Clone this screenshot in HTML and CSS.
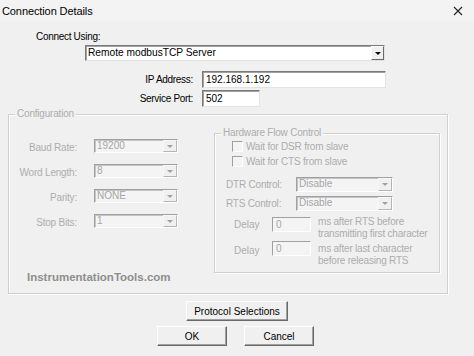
FILE: index.html
```html
<!DOCTYPE html>
<html lang="en">
<head>
    <meta charset="UTF-8">
    <title>Connection Details</title>
    <link rel="stylesheet" href="styles.css">
</head>
<body>
    <div class="dialog">
        <div class="titlebar">
            <span class="title">Connection Details</span>
            <svg class="close" width="10" height="10" viewBox="0 0 10 10">
                <path d="M1 1 L9 9 M9 1 L1 9" stroke="#222" stroke-width="1.1" fill="none"/>
            </svg>
        </div>

        <div class="connect-label">Connect Using:</div>
        <div class="combo combo-main">
            <span class="combo-text">Remote modbusTCP Server</span>
            <span class="combo-btn"><i class="arrow"></i></span>
        </div>

        <div class="field-row ip-row">
            <span class="field-label">IP Address:</span>
            <div class="textbox ip-box">192.168.1.192</div>
        </div>
        <div class="field-row port-row">
            <span class="field-label">Service Port:</span>
            <div class="textbox port-box">502</div>
        </div>

        <div class="group config">
            <span class="group-title">Configuration</span>
            <div class="config-body">
                <div class="serial">
                    <span class="serial-label">Baud Rate:</span>
                    <div class="combo combo-off"><span class="combo-text">19200</span><span class="combo-btn"><i class="arrow"></i></span></div>
                    <span class="serial-label">Word Length:</span>
                    <div class="combo combo-off"><span class="combo-text">8</span><span class="combo-btn"><i class="arrow"></i></span></div>
                    <span class="serial-label">Parity:</span>
                    <div class="combo combo-off"><span class="combo-text">NONE</span><span class="combo-btn"><i class="arrow"></i></span></div>
                    <span class="serial-label">Stop Bits:</span>
                    <div class="combo combo-off"><span class="combo-text">1</span><span class="combo-btn"><i class="arrow"></i></span></div>
                    <div class="watermark">InstrumentationTools.com</div>
                </div>

                <div class="group hw">
                    <span class="group-title">Hardware Flow Control</span>
                    <div class="check-row first"><span class="checkbox"></span>Wait for DSR from slave</div>
                    <div class="check-row"><span class="checkbox"></span>Wait for CTS from slave</div>

                    <div class="ctl-row dtr">
                        <span class="ctl-label">DTR Control:</span>
                        <div class="combo combo-off ctl-combo"><span class="combo-text">Disable</span><span class="combo-btn"><i class="arrow"></i></span></div>
                    </div>
                    <div class="ctl-row rts">
                        <span class="ctl-label">RTS Control:</span>
                        <div class="combo combo-off ctl-combo"><span class="combo-text">Disable</span><span class="combo-btn"><i class="arrow"></i></span></div>
                    </div>

                    <div class="delay-row first-delay">
                        <span class="delay-label">Delay</span>
                        <div class="textbox delay-box">0</div>
                        <span class="delay-note">ms after RTS before<br>transmitting first character</span>
                    </div>
                    <div class="delay-row second-delay">
                        <span class="delay-label">Delay</span>
                        <div class="textbox delay-box">0</div>
                        <span class="delay-note">ms after last character<br>before releasing RTS</span>
                    </div>
                </div>
            </div>
        </div>

        <div class="actions">
            <div class="proto-row"><button class="btn proto">Protocol Selections</button></div>
            <div class="ok-row">
                <button class="btn ok">OK</button>
                <button class="btn cancel">Cancel</button>
            </div>
        </div>
    </div>
</body>
</html>
```

FILE: styles.css
```css
body {
    margin: 0;
    padding: 0;
    background-color: #f0f0f0;
    font-family: "Liberation Sans", Arial, sans-serif;
    font-size: 10px;
    color: #000;
}
.dialog {
    width: 474px;
    height: 356px;
    overflow: hidden;
    background-color: #f0f0f0;
}

/* barra de titulo */
.titlebar {
    height: 21px;
    display: flex;
    align-items: center;
    justify-content: space-between;
    padding: 0 11px 0 2px;
    background-color: #f3f3f3;
}
.title {
    font-size: 11px;
    letter-spacing: -0.1px;
}

.connect-label {
    margin: 10px 0 0 36px;
    line-height: 12px;
    height: 12px;
    letter-spacing: -0.3px;
}

/* combos */
.combo {
    box-sizing: border-box;
    display: flex;
    align-items: stretch;
    border-style: solid;
    border-width: 1px;
    border-color: #a0a0a0 #fff #fff #a0a0a0;
}
.combo-text {
    flex: 1;
    padding-left: 2px;
    line-height: 12px;
    overflow: hidden;
    white-space: nowrap;
}
.combo-btn {
    width: 13px;
    display: flex;
    align-items: center;
    justify-content: center;
    box-sizing: border-box;
    border-style: solid;
    border-width: 1px;
    border-color: #fff #696969 #696969 #fff;
    background-color: #f0f0f0;
}
.arrow {
    width: 0;
    height: 0;
    border-left: 3px solid transparent;
    border-right: 3px solid transparent;
    border-top: 3px solid #000;
}
.combo-main {
    width: 300px;
    height: 16px;
    margin: 2px 0 0 85px;
    background-color: #fff;
    border-color: #7a7a7a #e3e3e3 #e3e3e3 #7a7a7a;
    box-shadow: inset 1px 1px 0 #a0a0a0;
    font-size: 10.2px;
}
.combo-main .combo-text {
    padding: 1px 0 0 2px;
}
.combo-off {
    width: 84px;
    height: 14px;
    background-color: #f4f4f4;
    color: #a5a5a5;
    box-shadow: inset 1px 1px 0 #c4c4c4;
}
.combo-off .combo-btn {
    border-color: #f7f7f7 #b5b5b5 #b5b5b5 #f7f7f7;
    width: 14px;
}
.combo-off .arrow {
    border-top-color: #a0a0a0;
}

/* campos de texto */
.field-row {
    display: flex;
    align-items: center;
    height: 17px;
}
.ip-row {
    margin-top: 10px;
}
.port-row {
    margin-top: 2px;
}
.field-label {
    width: 193px;
    text-align: right;
    margin-right: 9px;
    letter-spacing: -0.3px;
}
.textbox {
    box-sizing: border-box;
    height: 17px;
    background-color: #fff;
    border-style: solid;
    border-width: 1px;
    border-color: #7a7a7a #e3e3e3 #e3e3e3 #7a7a7a;
    box-shadow: inset 1px 1px 0 #a0a0a0;
    padding: 2px 0 0 3px;
    line-height: 12px;
}
.ip-box {
    width: 184px;
}
.port-box {
    width: 58px;
}

/* grupos */
.group {
    box-sizing: border-box;
    border: 1px solid #d0d0d0;
    box-shadow: inset 1px 1px 0 #fff, 1px 1px 0 #fff;
}
.group-title {
    display: block;
    width: max-content;
    height: 12px;
    line-height: 12px;
    margin: -7px 0 0 6px;
    padding: 0 2px;
    background-color: #f0f0f0;
    color: #adadad;
    letter-spacing: -0.2px;
}
.config {
    width: 440px;
    height: 180px;
    margin: 7px 0 0 8px;
}
.config-body {
    display: flex;
    align-items: flex-start;
}

.serial {
    display: grid;
    grid-template-columns: 68px 84px;
    grid-auto-rows: 14px;
    column-gap: 17px;
    row-gap: 11px;
    margin-top: 19px;
}
.serial-label {
    text-align: right;
    color: #adadad;
    line-height: 14px;
    padding-top: 2px;
    letter-spacing: -0.2px;
}
.watermark {
    grid-column: 1 / -1;
    margin-top: 31px;
    padding-left: 18px;
    font-size: 11.5px;
    font-weight: bold;
    color: #8e8e8e;
    line-height: 14px;
    white-space: nowrap;
}

.hw {
    width: 226px;
    height: 140px;
    margin: 13px 0 0 36px;
    color: #adadad;
}
.check-row {
    display: flex;
    align-items: center;
    height: 13px;
    margin: 2px 0 0 17px;
    letter-spacing: -0.2px;
}
.check-row.first {
    margin-top: 1px;
}
.checkbox {
    width: 11px;
    height: 11px;
    box-sizing: border-box;
    margin-right: 3px;
    border-style: solid;
    border-width: 1px;
    border-color: #a0a0a0 #fff #fff #a0a0a0;
    background-color: #f4f4f4;
}

.ctl-row {
    display: flex;
    align-items: center;
    height: 15px;
    padding-left: 11px;
}
.ctl-row.dtr {
    margin-top: 9px;
}
.ctl-row.rts {
    margin-top: 4px;
}
.ctl-label {
    width: 70px;
    letter-spacing: -0.2px;
}
.ctl-combo {
    width: 97px;
    height: 15px;
}

.delay-row {
    display: flex;
    align-items: flex-start;
    padding-left: 19px;
}
.first-delay {
    margin-top: 6px;
}
.second-delay {
    margin-top: 1px;
}
.delay-label {
    width: 38px;
    line-height: 15px;
}
.second-delay .delay-label {
    padding-top: 2px;
}
.delay-box {
    width: 39px;
    height: 15px;
    padding-top: 1px;
    background-color: #f4f4f4;
    color: #a5a5a5;
    border-color: #a0a0a0 #fff #fff #a0a0a0;
    box-shadow: none;
}
.delay-note {
    margin: -1px 0 0 7px;
    line-height: 12px;
    letter-spacing: -0.2px;
}
.second-delay .delay-note {
    margin-top: 2px;
}

/* botoes */
.actions {
    margin-top: 7px;
}
.btn {
    box-sizing: border-box;
    height: 20px;
    padding: 0;
    font-family: inherit;
    font-size: 10px;
    color: #000;
    background-color: #f0f0f0;
    border-style: solid;
    border-width: 1px;
    border-color: #fff #696969 #696969 #fff;
    box-shadow: inset -1px -1px 0 #a0a0a0;
}
.proto-row {
    padding-left: 186px;
}
.proto {
    width: 102px;
}
.ok-row {
    display: flex;
    gap: 17px;
    margin-top: 5px;
    padding-left: 157px;
}
.ok, .cancel {
    width: 70px;
}
```
